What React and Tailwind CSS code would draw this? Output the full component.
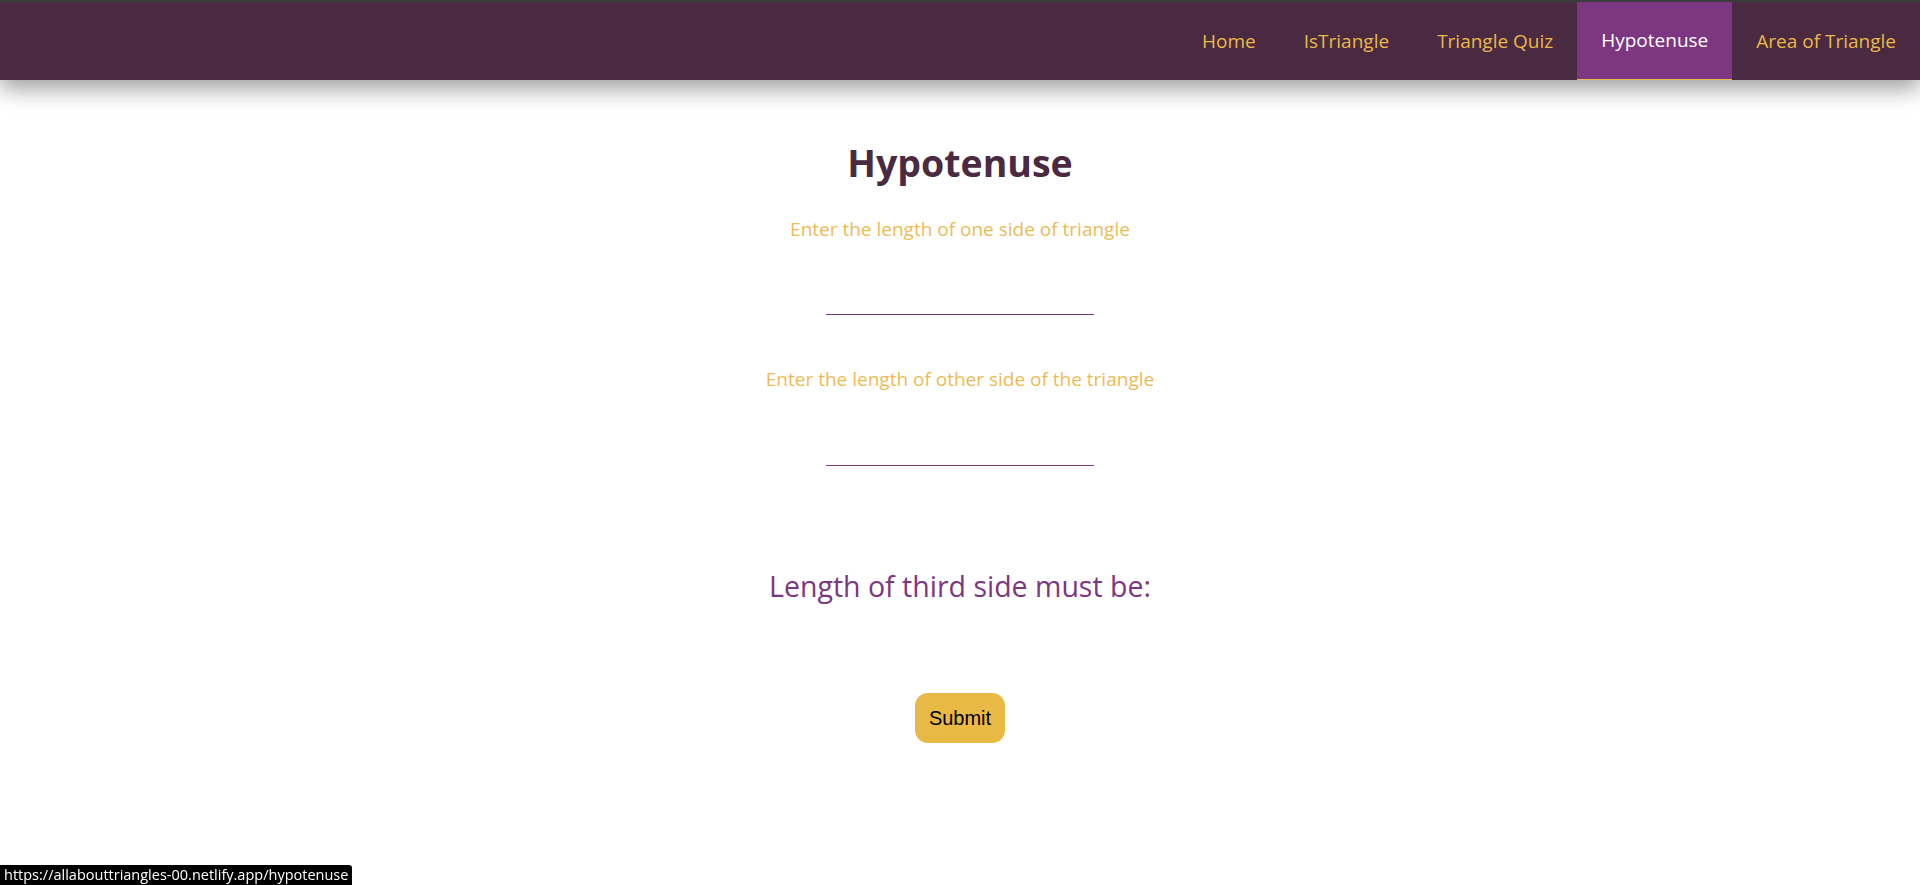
import { useState } from 'react'

const NAV = ['Home', 'IsTriangle', 'Triangle Quiz', 'Hypotenuse', 'Area of Triangle']

function Navbar({ active }) {
  return (
    <nav className="flex h-[80px] justify-end border-t-2 border-[#3c3c3c] bg-[#4a2a40] shadow-[0_10px_20px_rgba(0,0,0,0.35)]">
      {NAV.map(item => (
        <a
          key={item}
          href="#"
          className={
            item === active
              ? 'flex items-center border-b border-[#e9b949] bg-[#7d3680] px-6 text-[19px] text-white'
              : 'flex items-center px-6 text-[19px] text-[#e9b949]'
          }
        >
          {item}
        </a>
      ))}
    </nav>
  )
}

export default function App() {
  const [a, setA] = useState('')
  const [b, setB] = useState('')

  return (
    <div className="relative min-h-[885px] bg-white font-['Segoe_UI','Open_Sans',sans-serif]">
      <Navbar active="Hypotenuse" />

      <main className="flex flex-col items-center text-center">
        <h1 className="mt-[59px] text-[37.5px] font-bold leading-[48px] text-[#4a2a40]">Hypotenuse</h1>

        <label className="mt-[28px] text-[19px] leading-[28px] text-[#ebbb55]">
          Enter the length of one side of triangle
        </label>
        <input
          type="number"
          value={a}
          onChange={e => setA(e.target.value)}
          className="mt-[35px] h-[37px] w-[268px] border-b border-[#7d3680] text-center text-[20px] outline-none"
        />

        <label className="mt-[50px] text-[19px] leading-[28px] text-[#ebbb55]">
          Enter the length of other side of the triangle
        </label>
        <input
          type="number"
          value={b}
          onChange={e => setB(e.target.value)}
          className="mt-[36px] h-[37px] w-[268px] border-b border-[#7d3680] text-center text-[20px] outline-none"
        />

        <p className="mt-[100px] text-[28.5px] leading-[40px] text-[#7d3680]">Length of third side must be:</p>

        <button className="mt-[87px] h-[50px] rounded-[13px] bg-[#e8b944] px-[14px] font-['Liberation_Sans',Arial,sans-serif] text-[20px] text-black">
          Submit
        </button>
      </main>

      <div className="fixed bottom-0 left-0 rounded-tr-[3px] bg-black px-[4px] text-[14.5px] leading-[20px] text-white">
        https://allabouttriangles-00.netlify.app/hypotenuse
      </div>
    </div>
  )
}
